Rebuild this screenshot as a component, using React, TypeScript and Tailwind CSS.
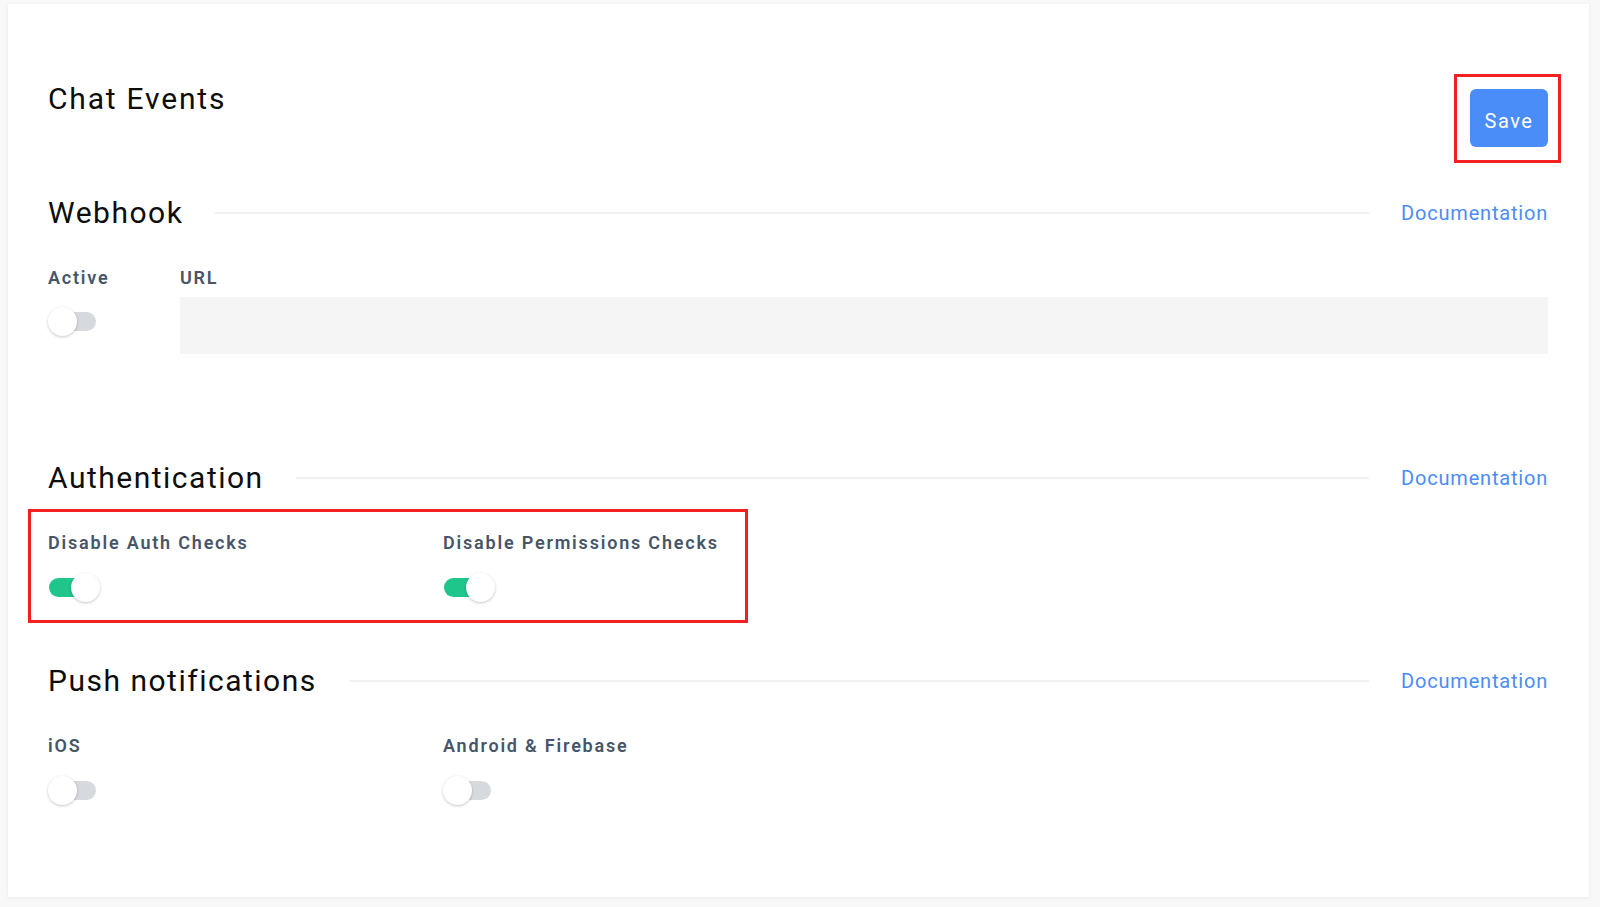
import React from 'react';

function Toggle({ on }: { on: boolean }) {
  return (
    <div className="relative h-[29px] w-[52px]">
      <div
        className={`absolute left-[1px] top-[5px] h-[19px] w-[47px] rounded-full ${
          on ? 'bg-[#1ec68b]' : 'bg-[#d6d9dd]'
        }`}
      />
      <div
        className={`absolute top-0 h-[29px] w-[29px] rounded-full bg-white shadow-[0_1px_3px_rgba(0,0,0,0.22)] ${
          on ? 'left-[23px]' : 'left-0'
        }`}
      />
    </div>
  );
}

function Label({ children }: { children: React.ReactNode }) {
  return (
    <div className="text-[18px] leading-[18px] font-semibold tracking-[0.1em] text-[#475569] whitespace-nowrap">
      {children}
    </div>
  );
}

function SectionHeader({ title }: { title: string }) {
  return (
    <div className="flex h-[30px] items-center gap-8">
      <h2 className="text-[30px] leading-[30px] font-normal tracking-[0.05em] text-[#0d0d0d] whitespace-nowrap">
        {title}
      </h2>
      <div className="h-[2px] flex-1 bg-[#f1f1f1]" />
      <a className="text-[20px] leading-[30px] tracking-[0.04em] text-[#4c8cf5] whitespace-nowrap cursor-pointer">
        Documentation
      </a>
    </div>
  );
}

function ToggleField({ label, on }: { label: string; on: boolean }) {
  return (
    <div className="flex w-[395px] flex-col">
      <Label>{label}</Label>
      <div className="mt-[21px]">
        <Toggle on={on} />
      </div>
    </div>
  );
}

export default function App() {
  return (
    <div className="min-h-screen bg-[#f8f8f8] pt-[4px] font-['Roboto',sans-serif]">
      <div className="ml-[8px] h-[893px] w-[1581px] bg-white pl-[40px] pr-[41px] pt-[80px] shadow-[0_1px_4px_rgba(0,0,0,0.06)]">
        {/* Page header */}
        <div className="flex items-start justify-between">
          <h1 className="text-[30px] leading-[30px] font-normal tracking-[0.06em] text-[#0d0d0d]">
            Chat Events
          </h1>
          <div className="relative mt-[5px]">
            <button className="h-[58px] w-[78px] rounded-[6px] bg-[#4b8df8] pt-[6px] text-[20px] font-normal tracking-[0.08em] text-white">
              Save
            </button>
            <span className="pointer-events-none absolute -left-[16px] -right-[13px] -top-[15px] -bottom-[16px] border-[3px] border-[#f3201f]" />
          </div>
        </div>

        {/* Webhook */}
        <div className="mt-[51px]">
          <SectionHeader title="Webhook" />
          <div className="mt-[41px] flex">
            <div className="flex w-[132px] flex-col">
              <Label>Active</Label>
              <div className="mt-[20px]">
                <Toggle on={false} />
              </div>
            </div>
            <div className="flex flex-1 flex-col">
              <Label>URL</Label>
              <input className="mt-[10px] h-[57px] w-full bg-[#f5f5f5] px-4 text-[18px] outline-none" />
            </div>
          </div>
        </div>

        {/* Authentication */}
        <div className="mt-[109px]">
          <SectionHeader title="Authentication" />
          <div className="relative mt-[41px] flex">
            <ToggleField label="Disable Auth Checks" on />
            <ToggleField label="Disable Permissions Checks" on />
            <span className="pointer-events-none absolute -left-[20px] -top-[25px] -bottom-[21px] w-[720px] border-[3px] border-[#f3201f]" />
          </div>
        </div>

        {/* Push notifications */}
        <div className="mt-[64px]">
          <SectionHeader title="Push notifications" />
          <div className="mt-[41px] flex">
            <ToggleField label="iOS" on={false} />
            <ToggleField label="Android & Firebase" on={false} />
          </div>
        </div>
      </div>
    </div>
  );
}
